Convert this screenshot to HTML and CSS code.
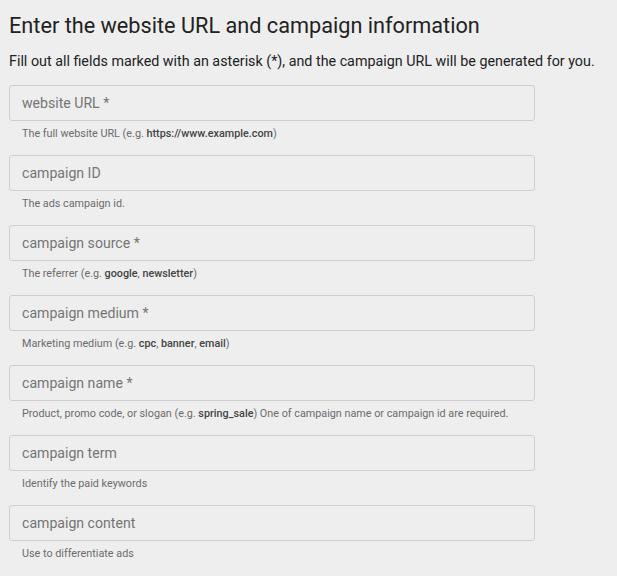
FILE: index.html
```html
<!DOCTYPE html>
<html lang="en">
<head>
  <meta charset="UTF-8" />
  <title>Campaign URL Builder</title>
  <link rel="stylesheet" href="styles.css">
</head>
<body>
  <div class="builder">
    <h2>Enter the website URL and campaign information</h2>
    <p class="intro">Fill out all fields marked with an asterisk (*), and the campaign URL will be generated for you.</p>

    <div class="field">
      <input type="text" placeholder="website URL *">
      <div class="hint">The full website URL (e.g. <strong>https://www.example.com</strong>)</div>
    </div>

    <div class="field">
      <input type="text" placeholder="campaign ID">
      <div class="hint">The ads campaign id.</div>
    </div>

    <div class="field">
      <input type="text" placeholder="campaign source *">
      <div class="hint">The referrer (e.g. <strong>google</strong>, <strong>newsletter</strong>)</div>
    </div>

    <div class="field">
      <input type="text" placeholder="campaign medium *">
      <div class="hint">Marketing medium (e.g. <strong>cpc</strong>, <strong>banner</strong>, <strong>email</strong>)</div>
    </div>

    <div class="field">
      <input type="text" placeholder="campaign name *">
      <div class="hint">Product, promo code, or slogan (e.g. <strong>spring_sale</strong>) One of campaign name or campaign id are required.</div>
    </div>

    <div class="field">
      <input type="text" placeholder="campaign term">
      <div class="hint">Identify the paid keywords</div>
    </div>

    <div class="field">
      <input type="text" placeholder="campaign content">
      <div class="hint">Use to differentiate ads</div>
    </div>
  </div>
</body>
</html>
```

FILE: styles.css
```css
* {
  box-sizing: border-box;
}
body {
  font-family: Roboto, 'Liberation Sans', sans-serif;
  margin: 0;
  padding: 0;
  background-color: #eeeeee;
  color: #212121;
}
.builder {
  padding: 11px 9px 0 9px;
}
h2 {
  font-size: 21.7px;
  font-weight: 400;
  margin: 0;
  line-height: 30px;
  color: #222;
}
.intro {
  font-size: 14.3px;
  margin: 10px 0 14px 0;
  line-height: 20px;
  color: #222;
  white-space: nowrap;
}
.field {
  margin-bottom: 13px;
}
.field input {
  display: block;
  width: 526px;
  height: 36px;
  padding: 0 12px;
  font-family: inherit;
  font-size: 14.1px;
  color: #333;
  background-color: #eeeeee;
  border: 1px solid #cfcfcf;
  border-radius: 3px;
  outline: none;
}
.field input::placeholder {
  color: #757575;
}
.hint {
  margin: 5px 0 0 13px;
  font-size: 10.8px;
  line-height: 16px;
  color: #6c6c6c;
}
.hint strong {
  font-weight: 500;
  color: #444;
}
```
